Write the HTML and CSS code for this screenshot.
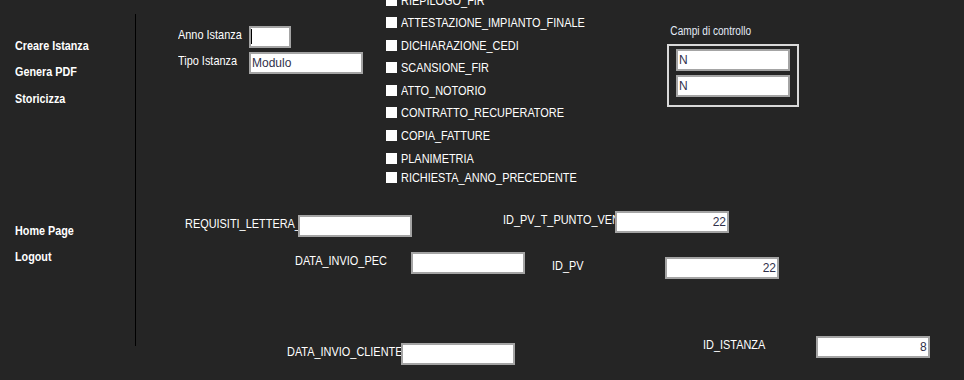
FILE: index.html
```html
<!DOCTYPE html>
<html lang="it">
<head>
<meta charset="utf-8">
<title>Istanza</title>
<link rel="stylesheet" href="styles.css">
</head>
<body>
<div class="app">
  <nav class="sidebar">
    <ul class="nav">
      <li>Creare Istanza</li>
      <li>Genera PDF</li>
      <li>Storicizza</li>
    </ul>
    <ul class="nav nav-bottom">
      <li>Home Page</li>
      <li>Logout</li>
    </ul>
  </nav>
  <main class="form">
    <section class="top">
      <div class="meta">
        <div class="meta-row">
          <span class="meta-label">Anno Istanza</span>
          <span class="caret-wrap"><input class="inp inp-short" type="text" value=""></span>
        </div>
        <div class="meta-row">
          <span class="meta-label">Tipo Istanza</span>
          <input class="inp" type="text" value="Modulo">
        </div>
      </div>
      <ul class="checks">
        <li class="check"><span class="box"></span><span class="ctext">RIEPILOGO_FIR</span></li>
        <li class="check"><span class="box"></span><span class="ctext">ATTESTAZIONE_IMPIANTO_FINALE</span></li>
        <li class="check"><span class="box"></span><span class="ctext">DICHIARAZIONE_CEDI</span></li>
        <li class="check"><span class="box"></span><span class="ctext">SCANSIONE_FIR</span></li>
        <li class="check"><span class="box"></span><span class="ctext">ATTO_NOTORIO</span></li>
        <li class="check"><span class="box"></span><span class="ctext">CONTRATTO_RECUPERATORE</span></li>
        <li class="check"><span class="box"></span><span class="ctext">COPIA_FATTURE</span></li>
        <li class="check"><span class="box"></span><span class="ctext">PLANIMETRIA</span></li>
        <li class="check check-last"><span class="box"></span><span class="ctext">RICHIESTA_ANNO_PRECEDENTE</span></li>
      </ul>
      <div class="control">
        <div class="control-title">Campi di controllo</div>
        <div class="control-box">
          <input class="inp" type="text" value="N">
          <input class="inp" type="text" value="N">
        </div>
      </div>
    </section>
    <div class="row row-a">
      <div class="field f-req"><span class="flabel">REQUISITI_LETTERA_</span><input class="inp" type="text" value=""></div>
      <div class="field f-pvt"><span class="flabel">ID_PV_T_PUNTO_VEN</span><input class="inp num" type="text" value="22"></div>
    </div>
    <div class="row row-b">
      <div class="field f-pec"><span class="flabel">DATA_INVIO_PEC</span><input class="inp" type="text" value=""></div>
      <div class="field f-pv"><span class="flabel">ID_PV</span><input class="inp num" type="text" value="22"></div>
    </div>
    <div class="row row-c">
      <div class="field f-cli"><span class="flabel">DATA_INVIO_CLIENTE</span><input class="inp" type="text" value=""></div>
      <div class="field f-ist"><span class="flabel">ID_ISTANZA</span><input class="inp num" type="text" value="8"></div>
    </div>
  </main>
</div>
</body>
</html>
```
FILE: styles.css
```css
* { box-sizing: border-box; }
html, body { margin: 0; padding: 0; }
body {
  background: #252525;
  color: #ffffff;
  font-family: "Liberation Sans Narrow", "Arial Narrow", "Liberation Sans", Arial, sans-serif;
  font-size: 13px;
  width: 964px;
  height: 380px;
  overflow: hidden;
}
.app { display: flex; align-items: flex-start; }

/* condensed look: the narrow face is not installed, so the regular face is squeezed */
.nav li,
.meta-label,
.ctext,
.flabel,
.control-title {
  transform: scaleX(0.84);
  transform-origin: 0 50%;
}

.sidebar {
  width: 136px;
  flex: none;
  margin-top: 14px;
  height: 332px;
  border-right: 1px solid #000;
  padding-top: 18.5px;
}
.nav {
  list-style: none;
  margin: 0;
  padding: 0 0 0 15px;
  font-weight: bold;
  line-height: 26.5px;
}
.nav li { transform: scaleX(0.83); }
.nav-bottom { margin-top: 105.5px; }

.form { flex: 1; display: flex; flex-direction: column; }
.top { display: flex; align-items: flex-start; height: 210.7px; }

.meta { margin: 26px 0 0 42px; display: flex; flex-direction: column; gap: 4px; }
.meta-row { display: flex; align-items: flex-start; height: 22px; }
.meta-label { width: 71px; line-height: 18px; white-space: nowrap; flex: none; }

.inp {
  position: relative;
  width: 114px;
  height: 22px;
  margin: 0;
  border: 2px solid #a4a4a4;
  border-radius: 0;
  background: #fff;
  padding: 0 1px;
  font-family: "Liberation Sans", Arial, sans-serif;
  font-size: 12px;
  color: #30304a;
  outline: none;
  flex: none;
}
.inp-short { width: 42px; }
.num { text-align: right; }

.caret-wrap { position: relative; display: block; }
.caret-wrap::after {
  content: "";
  position: absolute;
  left: 2px;
  top: 3px;
  width: 1px;
  height: 15px;
  background: #000;
}

.checks {
  list-style: none;
  margin: -11.3px 0 0 23px;
  padding: 0;
  width: 281px;
  flex: none;
}
.check {
  display: flex;
  align-items: center;
  gap: 4px;
  height: 22.6px;
  white-space: nowrap;
}
.check-last { margin-top: -3.5px; }
.box { width: 11px; height: 11px; background: #fff; flex: none; }
.ctext { display: block; }

.control { margin-top: 22.5px; width: 133px; flex: none; }
.control-title {
  font-size: 12px;
  line-height: 16px;
  padding-left: 4px;
  margin-bottom: 5.5px;
  color: #e4ebf7;
}
.control-box {
  width: 132px;
  border: 2px solid #d9d9d9;
  padding: 3px 7px 8px 7px;
  display: flex;
  flex-direction: column;
  gap: 4px;
}

.row { display: flex; align-items: flex-start; }
.row-a { height: 41px; }
.row-b { height: 84.3px; }
.field { display: flex; align-items: flex-start; flex: none; }
.flabel { line-height: 18px; white-space: nowrap; flex: none; }

.f-req { margin-left: 49px; margin-top: 4.3px; }
.f-req .flabel { width: 113.3px; }
.f-pvt { margin-left: 91px; }
.f-pvt .flabel { width: 111.7px; }
.f-pec { margin-left: 159px; }
.f-pec .flabel { width: 116px; }
.f-pv { margin-left: 26.7px; margin-top: 5px; }
.f-pv .flabel { width: 113.3px; }
.f-cli { margin-left: 150.8px; margin-top: 7.3px; }
.f-cli .flabel { width: 113.8px; }
.f-ist { margin-left: 188.7px; }
.f-ist .flabel { width: 112.5px; }
```
